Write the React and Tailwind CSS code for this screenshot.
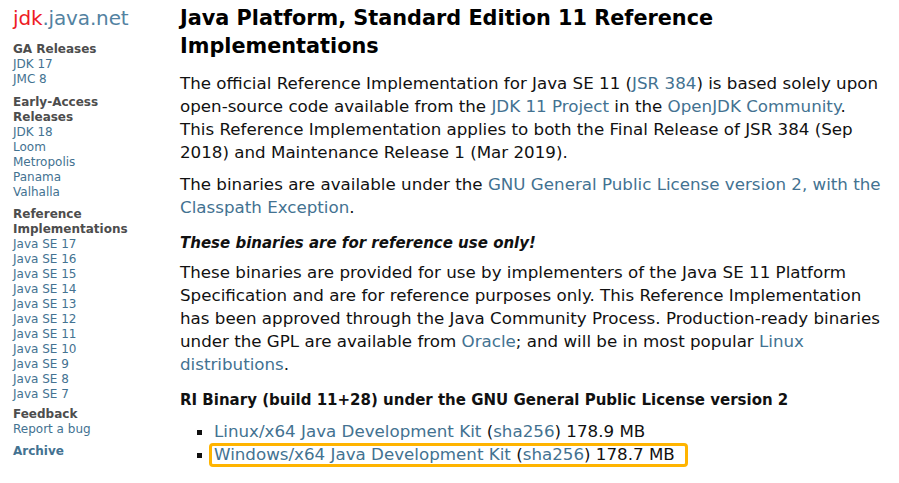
import React from 'react';

const link = 'text-[#437291]';

function Side() {
  const head = 'font-bold text-[#4d4d4d]';
  return (
    <div className="w-[180px] shrink-0 pl-[13px] text-[12px] leading-[15px]">
      <div className="text-[20px] leading-[26px] pt-[5px] tracking-[-0.15px]">
        <span className="text-[#ee1c25]">jdk</span>
        <span className="text-[#5382a1]">.java.net</span>
      </div>
      <div className="mt-[11px]">
        <div className={head}>GA Releases</div>
        <div className={link}>JDK 17</div>
        <div className={link}>JMC 8</div>
      </div>
      <div className="mt-[8px]">
        <div className={head}>Early-Access<br />Releases</div>
        {['JDK 18', 'Loom', 'Metropolis', 'Panama', 'Valhalla'].map((t) => (
          <div key={t} className={link}>{t}</div>
        ))}
      </div>
      <div className="mt-[7px]">
        <div className={head}>Reference<br />Implementations</div>
        {[17, 16, 15, 14, 13, 12, 11, 10, 9, 8, 7].map((n) => (
          <div key={n} className={link}>Java SE {n}</div>
        ))}
      </div>
      <div className="mt-[5px]">
        <div className={head}>Feedback</div>
        <div className={link}>Report a bug</div>
      </div>
      <div className="mt-[7px]">
        <div className={'font-bold ' + link}>Archive</div>
      </div>
    </div>
  );
}

export default function App() {
  return (
    <div className="flex min-h-screen bg-white text-black font-['DejaVu_Sans',sans-serif]">
      <Side />
      <div className="w-[702px] pt-[4px]">
        <h1 className="text-[20.8px] leading-[28px] font-bold">
          Java Platform, Standard Edition 11 Reference Implementations
        </h1>
        <div className="text-[16.7px] leading-[23px] text-[#111]">
          <p className="mt-[12px]">
            The official Reference Implementation for Java SE 11 (<span className={link}>JSR 384</span>) is based
            solely upon open-source code available from the <span className={link}>JDK 11 Project</span> in the{' '}
            <span className={link}>OpenJDK Community</span>. This Reference Implementation applies to both the
            Final Release of JSR 384 (Sep 2018) and Maintenance Release 1 (Mar 2019).
          </p>
          <p className="mt-[9px]">
            The binaries are available under the{' '}
            <span className={link}>GNU General Public License version 2, with the Classpath Exception</span>.
          </p>
          <p className="mt-[14px] text-[15px] leading-[20px] font-bold italic">
            These binaries are for reference use only!
          </p>
          <p className="mt-[8px]">
            These binaries are provided for use by implementers of the Java SE 11 Platform Specification and are
            for reference purposes only. This Reference Implementation has been approved through the Java
            Community Process. Production-ready binaries under the GPL are available from{' '}
            <span className={link}>Oracle</span>; and will be in most popular <span className={link}>Linux
            distributions</span>.
          </p>
          <h2 className="mt-[14px] text-[15px] leading-[20px] font-bold">
            RI Binary (build 11+28) under the GNU General Public License version 2
          </h2>
          <ul className="mt-[10px] list-[square] pl-[34px]">
            <li>
              <span className={link}>Linux/x64 Java Development Kit</span> (<span className={link}>sha256</span>) 178.9 MB
            </li>
            <li>
              <span className="relative">
                <span className={link}>Windows/x64 Java Development Kit</span> (<span className={link}>sha256</span>) 178.7 MB
                <span className="absolute -left-[5px] -right-[13px] -top-[1px] -bottom-[3px] rounded-[4px] border-[3px] border-[#ffb400]" />
              </span>
            </li>
          </ul>
        </div>
      </div>
    </div>
  );
}
